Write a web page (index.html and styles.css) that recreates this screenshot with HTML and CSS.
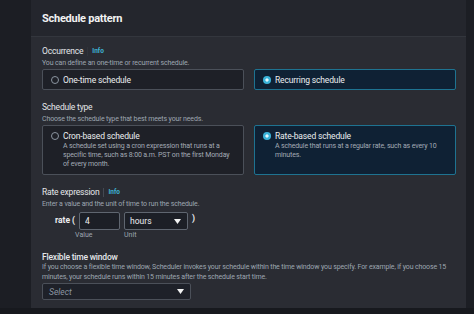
FILE: index.html
```html
<!DOCTYPE html>
<html lang="en">
<head>
  <meta charset="UTF-8">
  <meta name="viewport" content="width=device-width, initial-scale=1.0">
  <title>Schedule pattern</title>
  <link rel="stylesheet" href="styles.css">
</head>
<body>
  <div class="page">
    <div class="container">
      <div class="container-header">
        <h2>Schedule pattern</h2>
      </div>

      <div class="container-body">
        <!-- Occurrence -->
        <div class="field">
          <div class="field-label">Occurrence <span class="divider faint"></span><a href="#" class="info">Info</a></div>
          <p class="field-desc">You can define an one-time or recurrent schedule.</p>
          <div class="tiles">
            <label class="tile">
              <span class="radio"></span>
              <span class="tile-title">One-time schedule</span>
            </label>
            <label class="tile selected">
              <span class="radio"></span>
              <span class="tile-title">Recurring schedule</span>
            </label>
          </div>
        </div>

        <!-- Schedule type -->
        <div class="field">
          <div class="field-label">Schedule type</div>
          <p class="field-desc">Choose the schedule type that best meets your needs.</p>
          <div class="tiles">
            <label class="tile tile-tall">
              <span class="radio"></span>
              <span class="tile-text">
                <span class="tile-title">Cron-based schedule</span>
                <span class="tile-desc">A schedule set using a cron expression that runs at a specific time, such as 8:00 a.m. PST on the first Monday of every month.</span>
              </span>
            </label>
            <label class="tile tile-tall selected">
              <span class="radio"></span>
              <span class="tile-text">
                <span class="tile-title">Rate-based schedule</span>
                <span class="tile-desc">A schedule that runs at a regular rate, such as every 10 minutes.</span>
              </span>
            </label>
          </div>
        </div>

        <!-- Rate expression -->
        <div class="field">
          <div class="field-label">Rate expression <span class="divider"></span><a href="#" class="info">Info</a></div>
          <p class="field-desc">Enter a value and the unit of time to run the schedule.</p>
          <div class="rate-row">
            <span class="rate-word">rate (</span>
            <div class="rate-col">
              <input class="text-input" type="text" value="4">
              <span class="sub-label sub-value">Value</span>
            </div>
            <div class="rate-col">
              <div class="select select-unit">
                <span>hours</span>
                <svg class="caret" width="7" height="5" viewBox="0 0 7 5"><polygon points="0,0 7,0 3.5,5" fill="#f2f3f3"/></svg>
              </div>
              <span class="sub-label">Unit</span>
            </div>
            <span class="rate-close">)</span>
          </div>
        </div>

        <!-- Flexible time window -->
        <div class="field field-flex">
          <div class="field-label">Flexible time window</div>
          <p class="field-desc">If you choose a flexible time window, Scheduler invokes your schedule within the time window you specify. For example, if you choose 15 minutes, your schedule runs within 15 minutes after the schedule start time.</p>
          <div class="select select-flex">
            <span class="placeholder">Select</span>
            <svg class="caret" width="7" height="5" viewBox="0 0 7 5"><polygon points="0,0 7,0 3.5,5" fill="#f2f3f3"/></svg>
          </div>
        </div>
      </div>
    </div>
  </div>
</body>
</html>
```

FILE: styles.css
```css
* {
  margin: 0;
  padding: 0;
  box-sizing: border-box;
}

body {
  background-color: #17191e;
  font-family: Roboto, "Liberation Sans", sans-serif;
  color: #e9ebed;
  width: 474px;
  height: 314px;
  overflow: hidden;
}

.page {
  background: linear-gradient(#1c1e24, #1c1e24) no-repeat;
  background-size: 100% 308px;
  padding: 0 8px 0 31px;
}

.container {
  background-color: #2a2c33;
  height: 308px;
}

.container-header {
  height: 37px;
  background-color: #24262d;
  border-bottom: 1px solid #33363d;
  display: flex;
  align-items: center;
  padding: 0 11px;
}

.container-header h2 {
  font-size: 11px;
  font-weight: 700;
  letter-spacing: -0.25px;
  color: #f2f3f3;
}

.container-body {
  padding: 8px 10px 0 11px;
}

.field + .field {
  margin-top: 11px;
}

.field-label {
  font-size: 8.5px;
  letter-spacing: -0.2px;
  line-height: 13px;
  color: #e4e7ea;
  display: flex;
  align-items: center;
}

.divider {
  display: inline-block;
  width: 1px;
  height: 9px;
  background-color: #444952;
  margin: 0 4px 0 4px;
}

.divider.faint {
  background-color: #30333a;
}

.info {
  font-size: 6.5px;
  font-weight: 700;
  letter-spacing: 0;
  color: #3fb3d4;
  text-decoration: none;
}

.field-desc {
  font-size: 7px;
  letter-spacing: -0.14px;
  line-height: 10px;
  color: #9da6b0;
}

.tiles {
  display: grid;
  grid-template-columns: 1fr 1fr;
  gap: 10px;
  margin-top: 1px;
}

.tile {
  display: flex;
  align-items: center;
  background-color: #1e2027;
  border: 1px solid #4b5059;
  border-radius: 2px;
  padding: 4px 8px 4px 8px;
  height: 21px;
}

.tile.selected {
  background-color: #0f2134;
  border-color: #1e7391;
}

.tile-tall {
  align-items: flex-start;
  height: 50px;
  padding-top: 4px;
}

.radio {
  flex: none;
  width: 8px;
  height: 8px;
  border-radius: 50%;
  border: 1px solid #8b95a1;
  margin-right: 4px;
}

.tile-tall .radio {
  margin-top: 2px;
}

.selected .radio {
  border: none;
  background: radial-gradient(circle, #e4f7fd 0 1.3px, #3ab3d9 1.9px);
}

.tile-title {
  font-size: 8.5px;
  letter-spacing: -0.15px;
  line-height: 12px;
  color: #eceef0;
}

.tile-text {
  display: flex;
  flex-direction: column;
}

.tile-desc {
  font-size: 7px;
  letter-spacing: -0.14px;
  line-height: 9px;
  color: #a3abb5;
}

.rate-row {
  display: flex;
  align-items: flex-start;
  margin-top: 3px;
  padding-left: 13px;
}

.rate-word {
  font-size: 8.5px;
  font-weight: 700;
  line-height: 17px;
  margin-right: 4px;
  color: #eceef0;
}

.rate-col {
  display: flex;
  flex-direction: column;
  margin-right: 4px;
}

.text-input {
  width: 41px;
  height: 18px;
  background-color: #1c1f26;
  border: 1px solid #5f6670;
  border-radius: 2px;
  color: #eceef0;
  font-family: inherit;
  font-size: 8.5px;
  padding: 0 5px;
  outline: none;
}

.sub-label {
  font-size: 7px;
  line-height: 10px;
  color: #9da6b0;
}

.sub-value {
  margin-left: -4px;
}

.select {
  display: flex;
  align-items: center;
  justify-content: space-between;
  height: 18px;
  background-color: #1c1f26;
  border: 1px solid #5f6670;
  border-radius: 2px;
  padding: 0 6px 0 5px;
  font-size: 8.5px;
  color: #eceef0;
}

.select-unit {
  width: 64px;
}

.rate-close {
  font-size: 8.5px;
  font-weight: 700;
  line-height: 12px;
  color: #eceef0;
}

.field-flex .field-label {
  font-weight: 500;
  line-height: 12px;
}

.field-flex .field-desc {
  line-height: 9.5px;
}

.select-flex {
  width: 149px;
  height: 17px;
  margin-top: 1px;
  background-color: #1e2129;
  border-color: #4b5059;
}

.placeholder {
  font-style: italic;
  color: #8d97a3;
  padding-left: 1px;
}
```
